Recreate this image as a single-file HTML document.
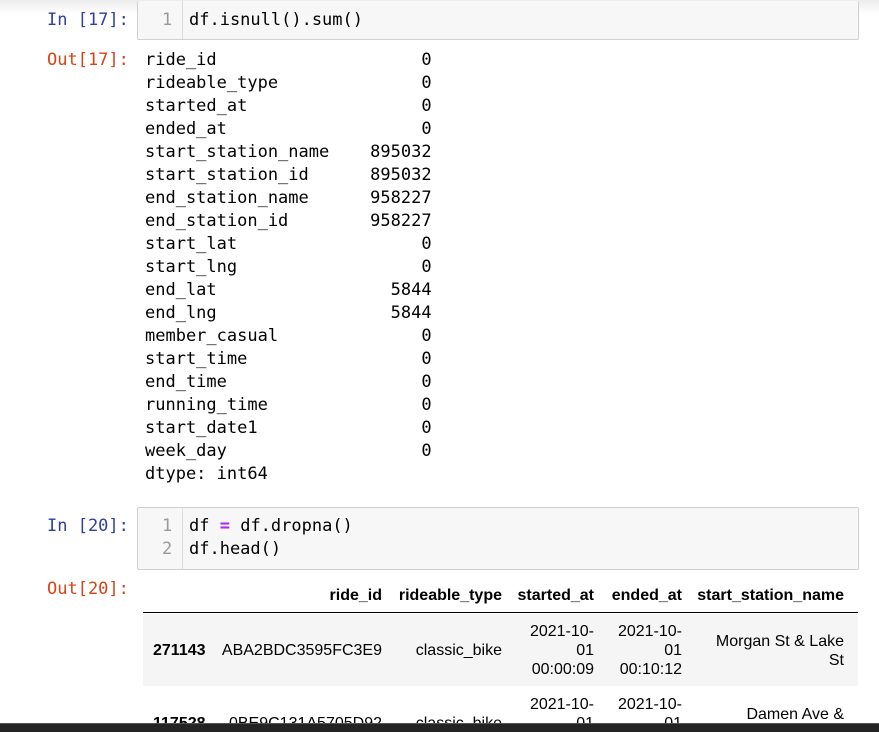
<!DOCTYPE html>
<html><head><meta charset="utf-8"><style>
body{margin:0;width:879px;height:731px;overflow:hidden;background:#fff;position:relative;font-family:"DejaVu Sans Mono",monospace;}
.top{position:absolute;left:0;top:0;width:879px;height:14px;background:linear-gradient(#ececec,#fff);}
.p{position:absolute;font-size:17px;line-height:23px;}
.in{color:#303f9f;}
.out{color:#d84315;}
.box{position:absolute;left:137px;width:720px;background:#f7f7f7;border:1px solid #cfcfcf;border-radius:2px;}
.gut{position:absolute;left:0;top:0;bottom:0;width:44px;border-right:1px solid #ddd;}
pre{margin:0;font-family:"DejaVu Sans Mono",monospace;font-size:17px;line-height:23px;color:#000;}
.ln{color:#999;}
.t{position:absolute;font-family:"Liberation Sans",Arial,sans-serif;font-size:16px;color:#000;text-align:right;line-height:19px;}
.b{font-weight:bold;}
</style></head><body>
<div class="top"></div>
<div class="box" style="top:1px;height:38px;border-top:none;">
  <div class="gut"></div>
  <pre style="position:absolute;left:24px;top:8px;"><span class="ln">1</span></pre>
  <pre style="position:absolute;left:51px;top:8px;">df.isnull().sum()</pre>
</div>
<div class="p in" style="left:47px;top:9px;">In [17]:</div>
<div class="p out" style="left:47px;top:49px;">Out[17]:</div>
<pre style="position:absolute;left:145px;top:49px;">ride_id                    0
rideable_type              0
started_at                 0
ended_at                   0
start_station_name    895032
start_station_id      895032
end_station_name      958227
end_station_id        958227
start_lat                  0
start_lng                  0
end_lat                 5844
end_lng                 5844
member_casual              0
start_time                 0
end_time                   0
running_time               0
start_date1                0
week_day                   0
dtype: int64</pre>

<div class="box" style="top:507px;height:61px;">
  <div class="gut"></div>
  <pre style="position:absolute;left:24px;top:7px;"><span class="ln">1
2</span></pre>
  <pre style="position:absolute;left:51px;top:7px;">df <span style="color:#aa22ff;font-weight:bold">=</span> df.dropna()
df.head()</pre>
</div>
<div class="p in" style="left:47px;top:515px;">In [20]:</div>
<div class="p out" style="left:47px;top:578px;">Out[20]:</div>

<div style="position:absolute;left:143px;top:612px;width:715px;height:1px;background:#000;"></div>
<div style="position:absolute;left:143px;top:614px;width:715px;height:72px;background:#f5f5f5;"></div>

<div class="t b" style="right:497px;top:586px;">ride_id</div>
<div class="t b" style="right:377px;top:586px;">rideable_type</div>
<div class="t b" style="right:285px;top:586px;">started_at</div>
<div class="t b" style="right:197px;top:586px;">ended_at</div>
<div class="t b" style="right:35px;top:586px;">start_station_name</div>

<div class="t b" style="left:153px;top:641px;">271143</div>
<div class="t" style="right:497px;top:641px;">ABA2BDC3595FC3E9</div>
<div class="t" style="right:377px;top:641px;">classic_bike</div>
<div class="t" style="right:285px;top:622px;">2021-10-<br>01<br>00:00:09</div>
<div class="t" style="right:197px;top:622px;">2021-10-<br>01<br>00:10:12</div>
<div class="t" style="right:35px;top:632px;">Morgan St &amp; Lake<br>St</div>

<div class="t b" style="left:153px;top:714px;">117528</div>
<div class="t" style="right:497px;top:714px;">0BE9C131A5705D92</div>
<div class="t" style="right:377px;top:714px;">classic_bike</div>
<div class="t" style="right:285px;top:695px;">2021-10-<br>01</div>
<div class="t" style="right:197px;top:695px;">2021-10-<br>01</div>
<div class="t" style="right:35px;top:705px;">Damen Ave &amp;</div>

<div style="position:absolute;left:0;top:723px;width:879px;height:8px;background:#242424;border-top:1px solid #555;"></div>
</body></html>
